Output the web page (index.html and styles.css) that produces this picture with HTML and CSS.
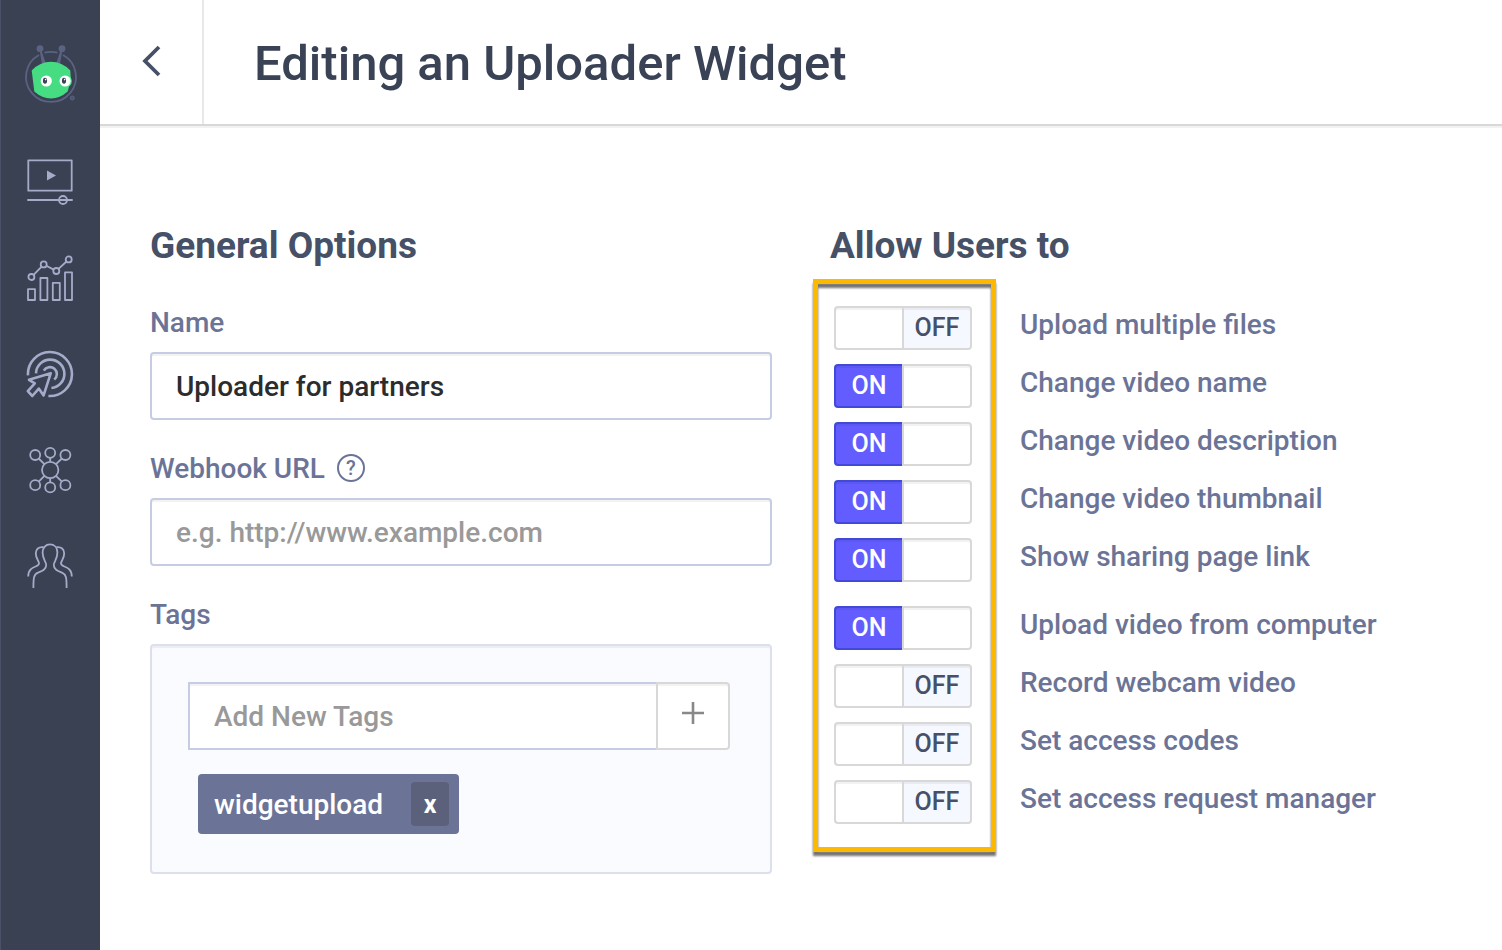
FILE: index.html
```
<!DOCTYPE html>
<html lang="en">
<head>
  <meta charset="UTF-8" />
  <meta name="viewport" content="width=device-width, initial-scale=1.0"/>
  <title>Editing an Uploader Widget</title>
  <link rel="stylesheet" href="styles.css">
</head>
<body>
  <nav class="sidebar" aria-label="Main">
    <a href="#" class="logo" aria-label="Home">
      <svg width="60" height="64" viewBox="0 0 60 64">
        <g fill="none" stroke="#5b6382" stroke-width="1.8">
          <path d="M19 15 A25 25 0 1 0 43 15"/>
          <path d="M24.5 12.6 Q31 11 37.5 12.6"/>
        </g>
        <g fill="#5b6382">
          <circle cx="20" cy="8.7" r="3.4"/>
          <circle cx="42" cy="8.7" r="3.4"/>
          <path d="M19.4 9 L22 24 H26 L21 9 Z"/>
          <path d="M42.6 9 L40 24 H36 L41 9 Z"/>
        </g>
        <path fill="#46dc82" d="M11.7 30.5 Q20 21.8 31 21.8 Q42 21.8 50.3 30.5 L50.8 40 L47.7 51.5 Q40 58.4 31 58.4 Q22 58.4 14.3 51.5 Z"/>
        <circle cx="45.3" cy="41" r="6.6" fill="#46dc82"/>
        <circle cx="26.3" cy="41" r="5.6" fill="#fff"/>
        <circle cx="45.1" cy="41" r="5.6" fill="#fff"/>
        <ellipse cx="25" cy="40.7" rx="2.1" ry="3" fill="#3b4256"/>
        <ellipse cx="44" cy="40.7" rx="2.1" ry="3" fill="#3b4256"/>
        <circle cx="25.6" cy="39.6" r="0.8" fill="#fff"/>
        <circle cx="44.6" cy="39.6" r="0.8" fill="#fff"/>
        <circle cx="52.3" cy="58" r="2" fill="#4c546e" stroke="#5b6382"/>
      </svg>
    </a>
    <a href="#" class="nav-link" aria-label="Videos">
      <svg class="icon" viewBox="0 0 48 48">
        <rect x="2.3" y="2.3" width="43.4" height="30.4"/>
        <path class="solid" d="M21 12.5 L30 17.5 L21 22.5 Z"/>
        <path d="M1.3 42 H46.7"/>
        <circle cx="37" cy="42" r="4"/>
      </svg>
    </a>
    <a href="#" class="nav-link" aria-label="Analytics">
      <svg class="icon" viewBox="0 0 48 48">
        <rect x="2" y="35.2" width="7" height="10.8"/>
        <rect x="14.4" y="24" width="7" height="22"/>
        <rect x="26.8" y="28.8" width="7" height="17.2"/>
        <rect x="39" y="18.4" width="7" height="27.6"/>
        <circle cx="5.4" cy="23" r="3"/>
        <circle cx="17.7" cy="10.4" r="3"/>
        <circle cx="30.3" cy="17" r="3"/>
        <circle cx="42.7" cy="5.4" r="3"/>
        <path d="M7.6 20.8 L15.6 12.6 M20.3 11.8 L27.7 15.6 M32.5 14.9 L40.5 7.5"/>
      </svg>
    </a>
    <a href="#" class="nav-link" aria-label="Campaigns">
      <svg class="icon bold" viewBox="0 0 48 48">
        <path d="M2 25.4 A22 22 0 1 1 22.4 46"/>
        <path d="M10 23.4 A14.2 14.2 0 1 1 25.4 38"/>
        <path d="M17.8 20.6 A7 7 0 1 1 28.2 29.6"/>
        <path d="M24.7 23.3 L3 29.8 L8.8 33.4 L1.8 41.2 L6.3 46 L12.8 38.6 L17.6 45.4 Z"/>
      </svg>
    </a>
    <a href="#" class="nav-link" aria-label="Integrations">
      <svg class="icon" viewBox="0 0 48 48">
        <circle cx="24.2" cy="24" r="8.2"/>
        <circle cx="9.2" cy="9" r="5"/>
        <circle cx="24.2" cy="6.8" r="5"/>
        <circle cx="39.4" cy="9" r="5"/>
        <circle cx="9.2" cy="39.2" r="5"/>
        <circle cx="24.2" cy="41.4" r="5"/>
        <circle cx="39.4" cy="39.2" r="5"/>
        <path d="M12.7 12.5 L18.4 18.2 M24.2 11.8 V15.8 M35.9 12.5 L30 18.2 M12.7 35.7 L18.4 29.8 M24.2 32.2 V36.4 M35.9 35.7 L30 29.8"/>
      </svg>
    </a>
    <a href="#" class="nav-link" aria-label="Users">
      <svg class="icon" viewBox="0 0 48 48">
        <path d="M7.4 46 C7.4 36 7.6 32.4 12 30.6 C16 29 20.2 27.6 20.2 23 C20.2 19.6 16.6 17.6 16.6 10.6 C16.6 5.4 19.8 2.4 24 2.4 C28.2 2.4 31.4 5.4 31.4 10.6 C31.4 17.6 27.8 19.6 27.8 23 C27.8 27.6 32 29 36 30.6 C40.4 32.4 40.6 36 40.6 46"/>
        <path d="M17.6 5.2 C12.6 4.4 9.8 7.4 9.8 11.6 C9.8 17 13 18.4 13 21.6 C13 25.6 2.2 23.4 2.2 34.6"/>
        <path d="M30.4 5.2 C35.4 4.4 38.2 7.4 38.2 11.6 C38.2 17 35 18.4 35 21.6 C35 25.6 45.8 23.4 45.8 34.6"/>
      </svg>
    </a>
  </nav>

  <div class="page">
    <header class="topbar">
      <button type="button" class="back-btn" aria-label="Back">
        <svg width="20" height="34" viewBox="0 0 20 34">
          <path d="M18 3 L4 17 L18 31" fill="none" stroke="#465066" stroke-width="3.8"/>
        </svg>
      </button>
      <h1>Editing an Uploader Widget</h1>
    </header>

    <main class="content">
      <section class="general">
        <h2>General Options</h2>
        <div class="field">
          <label for="name">Name</label>
          <input type="text" id="name" class="text-input" value="Uploader for partners" />
        </div>
        <div class="field">
          <div class="label-row">
            <label for="webhook">Webhook URL</label>
            <button type="button" class="help" aria-label="Help">?</button>
          </div>
          <input type="text" id="webhook" class="text-input" placeholder="e.g. http://www.example.com" />
        </div>
        <div class="field">
          <label for="new-tag">Tags</label>
          <div class="tag-box">
            <div class="tag-entry">
              <input type="text" id="new-tag" class="text-input" placeholder="Add New Tags" />
              <button type="button" class="add-btn" aria-label="Add tag">
                <svg width="22" height="22" viewBox="0 0 22 22">
                  <path d="M11 0 V22 M0 11 H22" stroke="#888" stroke-width="2.6"/>
                </svg>
              </button>
            </div>
            <div class="tag">
              <span>widgetupload</span>
              <button type="button" class="tag-remove">x</button>
            </div>
          </div>
        </div>
      </section>

      <section class="permissions">
        <h2>Allow Users to</h2>
        <div class="options">
          <div class="highlight"></div>
          <label class="option">
            <span class="switch"><input type="checkbox"><span class="on">ON</span><span class="off">OFF</span></span>
            <span class="option-text">Upload multiple files</span>
          </label>
          <label class="option">
            <span class="switch"><input type="checkbox" checked><span class="on">ON</span><span class="off">OFF</span></span>
            <span class="option-text">Change video name</span>
          </label>
          <label class="option">
            <span class="switch"><input type="checkbox" checked><span class="on">ON</span><span class="off">OFF</span></span>
            <span class="option-text">Change video description</span>
          </label>
          <label class="option">
            <span class="switch"><input type="checkbox" checked><span class="on">ON</span><span class="off">OFF</span></span>
            <span class="option-text">Change video thumbnail</span>
          </label>
          <label class="option">
            <span class="switch"><input type="checkbox" checked><span class="on">ON</span><span class="off">OFF</span></span>
            <span class="option-text">Show sharing page link</span>
          </label>
          <label class="option group-start">
            <span class="switch"><input type="checkbox" checked><span class="on">ON</span><span class="off">OFF</span></span>
            <span class="option-text">Upload video from computer</span>
          </label>
          <label class="option">
            <span class="switch"><input type="checkbox"><span class="on">ON</span><span class="off">OFF</span></span>
            <span class="option-text">Record webcam video</span>
          </label>
          <label class="option">
            <span class="switch"><input type="checkbox"><span class="on">ON</span><span class="off">OFF</span></span>
            <span class="option-text">Set access codes</span>
          </label>
          <label class="option">
            <span class="switch"><input type="checkbox"><span class="on">ON</span><span class="off">OFF</span></span>
            <span class="option-text">Set access request manager</span>
          </label>
        </div>
      </section>
    </main>
  </div>
</body>
</html>
```
FILE: styles.css
```
:root {
  --sidebar-bg: #394153;
  --icon: #a5acc9;
  --title: #3a4256;
  --heading: #465066;
  --label: #6b7497;
  --input-border: #c5cce4;
  --grey-border: #d8d8d8;
  --accent: #635dff;
  --accent-dark: #4149d6;
  --highlight: #fdb800;
  --inset: inset 0 2px 0 rgba(0, 0, 0, 0.05);
}

* {
  box-sizing: border-box;
}

body {
  margin: 0;
  min-height: 100vh;
  display: flex;
  font-family: Roboto, "Liberation Sans", sans-serif;
  font-size: 28px;
  font-weight: 500;
  color: var(--label);
  background: #fff;
}

button,
input {
  font: inherit;
}

button {
  cursor: pointer;
}

/* sidebar */
.sidebar {
  flex: 0 0 100px;
  display: flex;
  flex-direction: column;
  align-items: center;
  gap: 48px;
  padding-top: 40px;
  background: var(--sidebar-bg);
  box-shadow: inset 1px 0 0 #4a5268;
}

.logo {
  height: 70px;
}

.nav-link {
  height: 48px;
}

.icon {
  display: block;
  width: 48px;
  height: 48px;
  fill: none;
  stroke: var(--icon);
  stroke-width: 1.8;
  stroke-linejoin: round;
}

.icon.bold {
  stroke-width: 2.6;
}

.icon .solid {
  fill: var(--icon);
  stroke: none;
}

/* header */
.page {
  flex: 1;
  min-width: 0;
}

.topbar {
  display: flex;
  height: 126px;
  border-bottom: 2px solid var(--grey-border);
  box-shadow: 0 2px 0 #f2f2f2;
}

.back-btn {
  flex: 0 0 104px;
  padding: 4px 0 0;
  background: none;
  border: none;
  border-right: 2px solid #e8e8e8;
}

h1 {
  margin: 0;
  padding-left: 50px;
  font-size: 49px;
  font-weight: 500;
  line-height: 128px;
  color: var(--title);
}

h2 {
  margin: 0;
  font-size: 37px;
  font-weight: 700;
  line-height: 44px;
  color: var(--heading);
}

.content {
  display: grid;
  grid-template-columns: 1fr 1fr;
  gap: 58px;
  padding: 98px 50px 50px;
}

/* general options */
.general h2 {
  margin-bottom: 34px;
}

.field {
  margin-bottom: 28px;
}

.field label {
  display: block;
  line-height: 42px;
  margin-bottom: 8px;
}

.label-row {
  display: flex;
  gap: 12px;
}

.help {
  width: 28px;
  height: 28px;
  margin-top: 6px;
  padding: 0;
  border: 2px solid var(--label);
  border-radius: 50%;
  background: none;
  color: var(--label);
  font-size: 20px;
  line-height: 24px;
}

.text-input {
  display: block;
  width: 100%;
  height: 68px;
  padding: 0 24px;
  border: 2px solid var(--input-border);
  border-radius: 4px;
  background: #fff;
  box-shadow: var(--inset);
  color: #2c2c2c;
}

.text-input::placeholder {
  color: #999;
  opacity: 1;
}

.tag-box {
  padding: 36px 40px 38px 36px;
  border: 2px solid #dcdfee;
  border-radius: 4px;
  background: #fafbff;
  box-shadow: var(--inset);
}

.tag-entry {
  display: flex;
}

.tag-entry .text-input {
  flex: 1;
  min-width: 0;
  border-right: none;
  border-radius: 0;
}

.add-btn {
  flex: 0 0 74px;
  padding: 0 0 4px;
  border: 2px solid var(--grey-border);
  border-radius: 0 4px 4px 0;
  background: #fff;
  box-shadow: var(--inset);
}

.tag {
  display: inline-flex;
  align-items: center;
  gap: 28px;
  height: 60px;
  margin: 24px 0 0 10px;
  padding: 0 10px 0 16px;
  border-radius: 4px;
  background: var(--label);
  color: #fff;
}

.tag-remove {
  width: 38px;
  height: 44px;
  padding: 0;
  border: none;
  border-radius: 4px;
  background: #5b617a;
  color: #fff;
  font-size: 25px;
  font-weight: 700;
}

/* permissions */
.options {
  position: relative;
  display: flex;
  flex-direction: column;
  gap: 14px;
  margin-top: 38px;
  padding-left: 4px;
}

.option {
  display: flex;
  gap: 48px;
  cursor: pointer;
}

.group-start {
  margin-top: 10px;
}

.option-text {
  line-height: 38px;
}

.switch {
  position: relative;
  flex: 0 0 138px;
  display: flex;
  height: 44px;
  font-size: 25px;
  line-height: 40px;
  text-align: center;
}

.switch input {
  position: absolute;
  inset: 0;
  width: 100%;
  height: 100%;
  margin: 0;
  opacity: 0;
  cursor: pointer;
}

.on,
.off {
  border: 2px solid var(--grey-border);
  box-shadow: var(--inset);
}

.on {
  width: 68px;
  border-right: none;
  border-radius: 4px 0 0 4px;
  color: transparent;
}

.off {
  width: 70px;
  border-radius: 0 4px 4px 0;
  background: #f5f8ff;
  color: var(--heading);
}

.switch input:checked ~ .on {
  border-color: var(--accent-dark);
  background: var(--accent);
  color: #fff;
}

.switch input:checked ~ .off {
  background: #fff;
  color: transparent;
}

.highlight {
  position: absolute;
  top: -27px;
  bottom: -28px;
  left: -17px;
  width: 183px;
  border: 5px solid var(--highlight);
  filter: drop-shadow(0 4px 1px rgba(0, 0, 0, 0.55));
  pointer-events: none;
}
```
